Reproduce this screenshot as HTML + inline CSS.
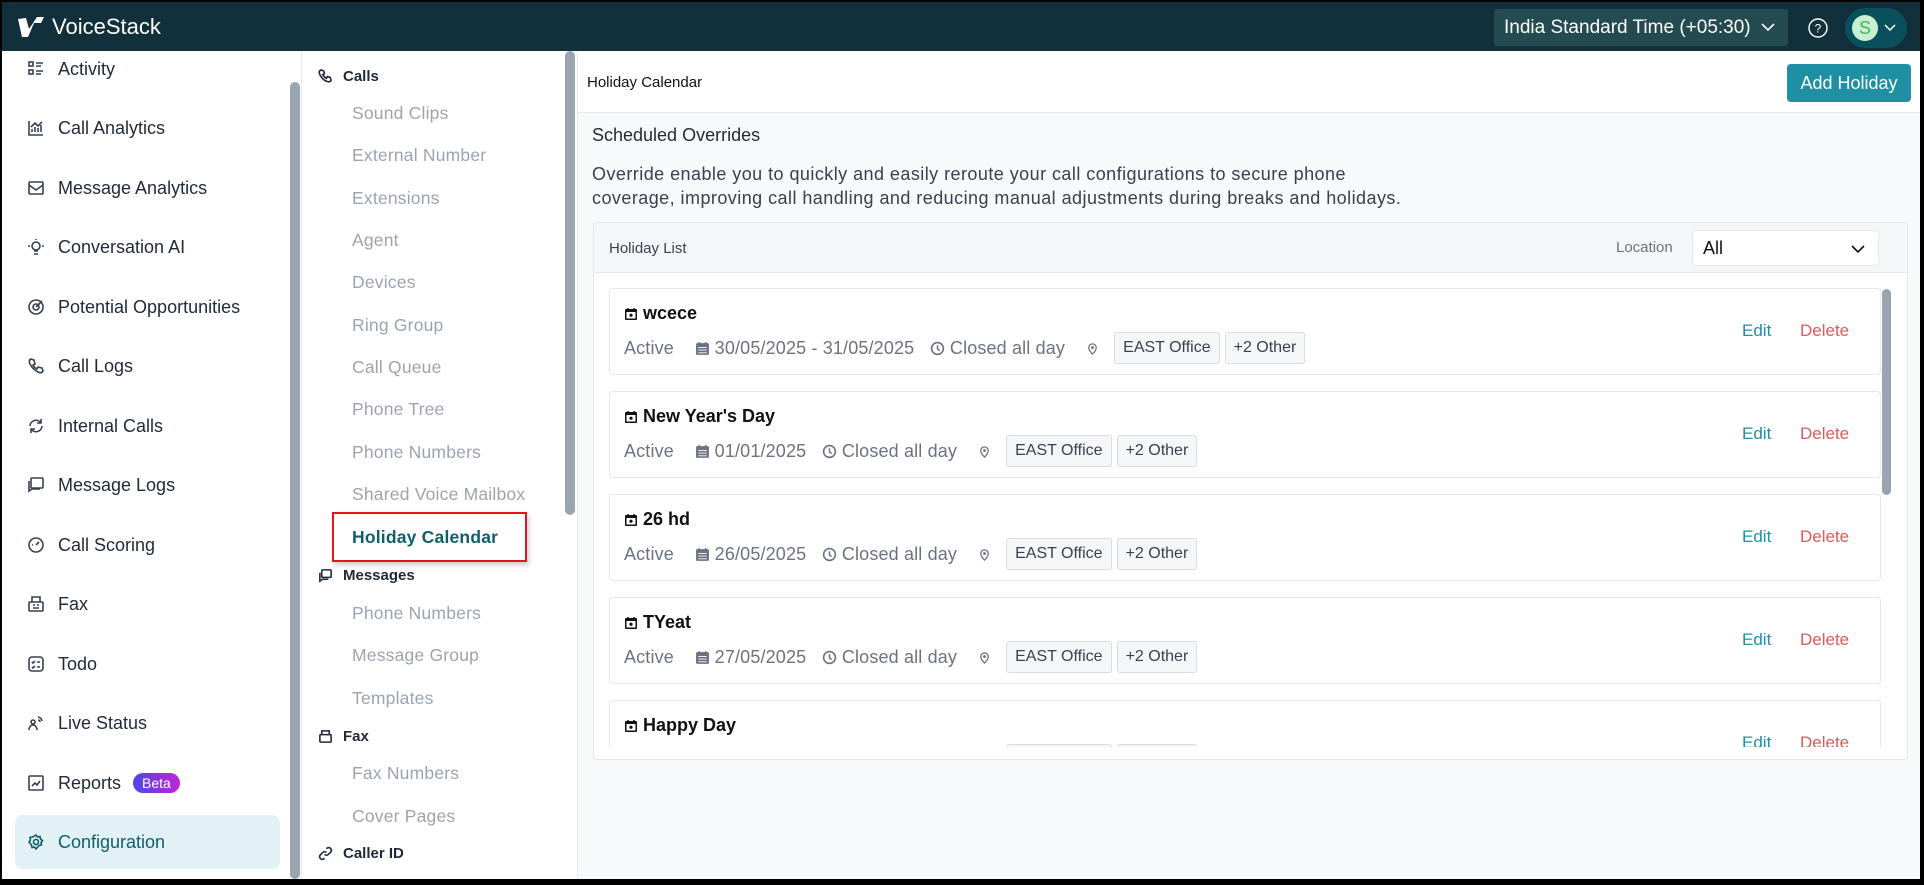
<!DOCTYPE html>
<html><head><meta charset="utf-8"><style>
*{box-sizing:border-box;margin:0;padding:0}
body{width:1924px;height:885px;overflow:hidden;background:#000;font-family:"Liberation Sans",sans-serif;position:relative}
.abs{position:absolute}
#app{position:absolute;left:2px;top:2px;width:1918px;height:877px;background:#fff;overflow:hidden}
#hdr{position:absolute;left:0;top:0;width:1918px;height:49px;background:#12303b}
.nav{position:absolute;left:25px;font-size:18px;color:#1f2937;display:flex;align-items:center;height:24px}
.nav svg{width:18px;height:18px;margin-right:13px;stroke:#374151;fill:none;stroke-width:1.6}
.sub{position:absolute;left:350px;font-size:17.5px;color:#9ca3af;height:24px;line-height:24px;letter-spacing:.2px}
.sec{position:absolute;left:316px;font-size:15px;font-weight:bold;color:#1f2937;display:flex;align-items:center;height:20px}
.sec svg{width:15px;height:15px;margin-right:10px;stroke:#1f2937;fill:none;stroke-width:1.7}
.card{position:absolute;left:607px;width:1272px;height:87px;background:#fff;border:1px solid #e5e7eb;border-radius:4px}
.card .t{position:absolute;left:14px;top:14px;font-size:18px;font-weight:bold;color:#111;display:flex;align-items:center}
.card .m{position:absolute;left:14px;top:43px;font-size:18px;color:#6b7280;display:flex;align-items:center;height:32px;white-space:nowrap;letter-spacing:.15px}
.tag{border:1px solid #d9dde3;background:#f5f6f8;border-radius:3px;font-size:16px;color:#374151;padding:0 8px;height:32px;line-height:30px;margin-right:5px;letter-spacing:0}
.card .e{position:absolute;left:1132px;top:32px;font-size:17px;color:#1f8fa3}
.card .d{position:absolute;left:1190px;top:32px;font-size:17px;color:#e05a5a}
</style></head><body>
<div id="app">
<div id="hdr">
 <svg class="abs" style="left:15px;top:13px" width="28" height="24" viewBox="0 0 28 24"><path d="M1 4 L9 3 L12 14 L20 2 L27 2 L24 8 L17 8 L11 22 L5 22 Z" fill="#fff"/></svg>
 <div class="abs" style="left:50px;top:12px;font-size:22px;color:#fff">VoiceStack</div>
 <div class="abs" style="left:1492px;top:7px;width:294px;height:37px;background:#244a52;border-radius:3px;color:#fff;font-size:19px;line-height:37px;padding-left:10px">India Standard Time (+05:30)<svg class="abs" style="right:12px;top:13px" width="16" height="10" viewBox="0 0 16 10"><path d="M2 2 L8 8 L14 2" stroke="#fff" stroke-width="1.6" fill="none"/></svg></div>
 <svg class="abs" style="left:1805px;top:15px" width="22" height="22" viewBox="0 0 22 22"><circle cx="11" cy="11" r="9" stroke="#fff" stroke-width="1.4" fill="none"/><text x="11" y="15.5" font-size="12" fill="#fff" text-anchor="middle" font-family="Liberation Sans">?</text></svg>
 <div class="abs" style="left:1843px;top:6px;width:62px;height:40px;background:#0a4f5c;border-radius:20px"></div>
 <div class="abs" style="left:1850px;top:13px;width:26px;height:26px;border-radius:13px;background:#c9efd3;color:#3dbb5a;font-size:18px;text-align:center;line-height:26px">S</div>
 <svg class="abs" style="left:1882px;top:22px" width="12" height="8" viewBox="0 0 12 8"><path d="M1 1 L6 6 L11 1" stroke="#fff" stroke-width="1.5" fill="none"/></svg>
</div>

<div class="abs" style="left:288px;top:80px;width:10px;height:797px;background:#9aa5b1;border-radius:5px"></div>
<div class="abs" style="left:299px;top:49px;width:1px;height:828px;background:#e5e7eb"></div>
<div class="abs" style="left:13px;top:813px;width:265px;height:54px;background:#e1f1f5;border-radius:8px"></div>
<div class="nav" style="top:55px"><svg viewBox="0 0 18 18"><rect x="2" y="2" width="4" height="4"/><rect x="2" y="10" width="4" height="4"/><path d="M9 3h7M9 6h5M9 11h7M9 14h5"/></svg>Activity</div>
<div class="nav" style="top:114px"><svg viewBox="0 0 18 18"><path d="M2 2v14h14M5 13v-3M8 13V8M11 13v-4M14 13V6M4 8l4-4 3 3 4-4"/></svg>Call Analytics</div>
<div class="nav" style="top:174px"><svg viewBox="0 0 18 18"><rect x="2" y="3" width="14" height="12" rx="1"/><path d="M2 6l7 5 7-5"/></svg>Message Analytics</div>
<div class="nav" style="top:233px"><svg viewBox="0 0 18 18"><circle cx="9" cy="8" r="4"/><path d="M7 13h4M7 16h4M1 8h2M15 8h2M9 1v1"/></svg>Conversation AI</div>
<div class="nav" style="top:293px"><svg viewBox="0 0 18 18"><circle cx="9" cy="9" r="7"/><circle cx="9" cy="9" r="3"/><path d="M9 9l6-6"/></svg>Potential Opportunities</div>
<div class="nav" style="top:352px"><svg viewBox="0 0 18 18"><path d="M4 2l3 1 1 4-2 1c1 2 2 3 4 4l1-2 4 1 1 3c-1 2-3 2-5 1C7 13 5 11 3 7 2 5 2 3 4 2z"/></svg>Call Logs</div>
<div class="nav" style="top:412px"><svg viewBox="0 0 18 18"><path d="M3 9a6 6 0 0 1 11-3M15 9a6 6 0 0 1-11 3M14 2v4h-4M4 16v-4h4"/></svg>Internal Calls</div>
<div class="nav" style="top:471px"><svg viewBox="0 0 18 18"><rect x="4" y="2" width="12" height="10" rx="1"/><path d="M2 5v10l3-2h8"/></svg>Message Logs</div>
<div class="nav" style="top:531px"><svg viewBox="0 0 18 18"><circle cx="9" cy="9" r="7"/><path d="M9 9l3-3M5 9h1"/></svg>Call Scoring</div>
<div class="nav" style="top:590px"><svg viewBox="0 0 18 18"><rect x="2" y="7" width="14" height="9" rx="1"/><path d="M5 7V2h8v5M6 10h2M10 10h2M6 13h6"/></svg>Fax</div>
<div class="nav" style="top:650px"><svg viewBox="0 0 18 18"><rect x="2" y="2" width="14" height="14" rx="3"/><path d="M5 7l1 1 2-2M10 7h3M5 12l1 1 2-2M10 12h3"/></svg>Todo</div>
<div class="nav" style="top:709px"><svg viewBox="0 0 18 18"><circle cx="6" cy="8" r="2"/><path d="M2 16c0-3 2-5 4-5s4 2 4 5M11 3a5 5 0 0 1 4 4M11 6a2 2 0 0 1 2 2"/></svg>Live Status</div>
<div class="nav" style="top:769px"><svg viewBox="0 0 18 18"><rect x="2" y="2" width="14" height="14" rx="1"/><path d="M5 12l3-3 2 2 3-4"/></svg>Reports<span style="margin-left:12px;background:linear-gradient(90deg,#4f46e5,#c026d3);color:#fff;font-size:14px;padding:2px 9px;border-radius:10px">Beta</span></div>
<div class="nav" style="top:828px;color:#0f5f6b"><svg viewBox="0 0 18 18" style="stroke:#0f5f6b"><circle cx="9" cy="9" r="2.5"/><path d="M9 2l1.5 2 2.5-.5.5 2.5 2 1.5-1.5 2 .5 2.5-2.5.5L9 16l-1.5-2-2.5.5-.5-2.5L2 9l1.5-2L3 4.5l2.5-.5z"/></svg>Configuration</div>

<div class="abs" style="left:563px;top:49px;width:10px;height:464px;background:#9aa5b1;border-radius:5px"></div>
<div class="abs" style="left:575px;top:49px;width:1px;height:828px;background:#e5e7eb"></div>
<div class="sec" style="top:64px"><svg viewBox="0 0 16 16"><path d="M3 1l3 1 1 3-2 1c1 2 2 3 4 4l1-2 3 1 1 3c-1 2-3 2-5 1C6 12 4 10 2 6 1 4 1 2 3 1z"/></svg>Calls</div>
<div class="sub" style="top:99px">Sound Clips</div>
<div class="sub" style="top:141px">External Number</div>
<div class="sub" style="top:184px">Extensions</div>
<div class="sub" style="top:226px">Agent</div>
<div class="sub" style="top:268px">Devices</div>
<div class="sub" style="top:311px">Ring Group</div>
<div class="sub" style="top:353px">Call Queue</div>
<div class="sub" style="top:395px">Phone Tree</div>
<div class="sub" style="top:438px">Phone Numbers</div>
<div class="sub" style="top:480px">Shared Voice Mailbox</div>
<div class="abs" style="left:330px;top:510px;width:195px;height:50px;border:2px solid #e3141b;box-shadow:2px 3px 5px rgba(0,0,0,.2)"></div>
<div class="sub" style="top:523px;color:#0f5f6b;font-weight:bold">Holiday Calendar</div>
<div class="sec" style="top:563px"><svg viewBox="0 0 16 16"><rect x="4" y="2" width="10" height="8" rx="1"/><path d="M2 5v9l3-2h6"/></svg>Messages</div>
<div class="sub" style="top:599px">Phone Numbers</div>
<div class="sub" style="top:641px">Message Group</div>
<div class="sub" style="top:684px">Templates</div>
<div class="sec" style="top:724px"><svg viewBox="0 0 16 16"><rect x="2" y="6" width="12" height="8" rx="1"/><path d="M4 6V2h8v4"/></svg>Fax</div>
<div class="sub" style="top:759px">Fax Numbers</div>
<div class="sub" style="top:802px">Cover Pages</div>
<div class="sec" style="top:841px"><svg viewBox="0 0 16 16"><path d="M7 9a3 3 0 0 0 4 0l3-3a3 3 0 0 0-4-4L9 3M9 7a3 3 0 0 0-4 0L2 10a3 3 0 0 0 4 4l1-1"/></svg>Caller ID</div>

<div class="abs" style="left:576px;top:49px;width:1342px;height:828px;background:#f8f9fb"></div>
<div class="abs" style="left:576px;top:49px;width:1342px;height:62px;background:#fff;border-bottom:1px solid #e5e7eb"></div>
<div class="abs" style="left:585px;top:72px;font-size:15px;color:#111">Holiday Calendar</div>
<div class="abs" style="left:1785px;top:62px;width:124px;height:38px;background:#1f8fa3;border-radius:4px;color:#fff;font-size:18px;text-align:center;line-height:38px">Add Holiday</div>
<div class="abs" style="left:590px;top:123px;font-size:18px;color:#1f2937">Scheduled Overrides</div>
<div class="abs" style="left:590px;top:160px;font-size:18px;color:#374151;line-height:24px;width:835px;letter-spacing:.45px">Override enable you to quickly and easily reroute your call configurations to secure phone coverage, improving call handling and reducing manual adjustments during breaks and holidays.</div>

<div class="abs" style="left:591px;top:220px;width:1315px;height:538px;background:#fff;border:1px solid #e5e7eb;border-radius:4px;overflow:hidden">
 <div class="abs" style="left:0;top:0;width:1315px;height:50px;background:#f5f6f8;border-bottom:1px solid #e5e7eb"></div>
 <div class="abs" style="left:15px;top:17px;font-size:15px;color:#374151">Holiday List</div>
 <div class="abs" style="left:1022px;top:16px;font-size:15px;color:#6b7280">Location</div>
 <div class="abs" style="left:1098px;top:7px;width:187px;height:36px;background:#fff;border:1px solid #e5e7eb;border-radius:4px;font-size:18px;color:#111;line-height:34px;padding-left:10px">All<svg class="abs" style="right:12px;top:13px" width="16" height="10" viewBox="0 0 16 10"><path d="M2 2 L8 8 L14 2" stroke="#111" stroke-width="1.6" fill="none"/></svg></div>
 <div class="abs" style="left:1288px;top:66px;width:9px;height:206px;background:#9aa5b1;border-radius:5px"></div>
</div>

<svg width="0" height="0" style="position:absolute"><defs><symbol id="cal" viewBox="0 0 14 14"><rect x="1" y="2" width="12" height="11" rx="1" fill="#111"/><rect x="2.5" y="5" width="9" height="6.5" fill="#fff"/><path d="M4 1v2M10 1v2" stroke="#111" stroke-width="1.5"/><circle cx="7" cy="8.2" r="1.6" fill="#111"/></symbol><symbol id="cal2" viewBox="0 0 14 14"><rect x="1" y="2" width="12" height="11" rx="1" fill="#6b7280"/><path d="M4 1v2M10 1v2" stroke="#6b7280" stroke-width="1.5"/><path d="M3 6h8M3 8.5h8M3 11h8" stroke="#fff" stroke-width=".8"/></symbol><symbol id="clk" viewBox="0 0 14 14"><circle cx="7" cy="7" r="5.5" stroke="#6b7280" stroke-width="1.5" fill="none"/><path d="M7 4v3.5l2 1.5" stroke="#6b7280" stroke-width="1.4" fill="none"/></symbol><symbol id="pin" viewBox="0 0 14 14"><path d="M7 13C4 10 3 8 3 6a4 4 0 0 1 8 0c0 2-1 4-4 7z" stroke="#6b7280" stroke-width="1.4" fill="none"/><circle cx="7" cy="6" r="1.5" fill="#6b7280"/></symbol></defs></svg>

<div class="abs" style="left:591px;top:272px;width:1290px;height:473px;overflow:hidden">
 <div class="card" style="left:16px;top:14px"><div class="t"><svg width="14" height="14"><use href="#cal"/></svg>&nbsp;wcece</div><div class="m">Active&nbsp;&nbsp;&nbsp;&nbsp;<svg width="15" height="15"><use href="#cal2"/></svg>&nbsp;30/05/2025 - 31/05/2025&nbsp;&nbsp;&nbsp;<svg width="15" height="15"><use href="#clk"/></svg>&nbsp;Closed all day&nbsp;&nbsp;&nbsp;&nbsp;<svg width="13" height="13"><use href="#pin"/></svg>&nbsp;&nbsp;&nbsp;<span class="tag">EAST Office</span><span class="tag">+2 Other</span></div><div class="e">Edit</div><div class="d">Delete</div></div>
 <div class="card" style="left:16px;top:117px"><div class="t"><svg width="14" height="14"><use href="#cal"/></svg>&nbsp;New Year's Day</div><div class="m">Active&nbsp;&nbsp;&nbsp;&nbsp;<svg width="15" height="15"><use href="#cal2"/></svg>&nbsp;01/01/2025&nbsp;&nbsp;&nbsp;<svg width="15" height="15"><use href="#clk"/></svg>&nbsp;Closed all day&nbsp;&nbsp;&nbsp;&nbsp;<svg width="13" height="13"><use href="#pin"/></svg>&nbsp;&nbsp;&nbsp;<span class="tag">EAST Office</span><span class="tag">+2 Other</span></div><div class="e">Edit</div><div class="d">Delete</div></div>
 <div class="card" style="left:16px;top:220px"><div class="t"><svg width="14" height="14"><use href="#cal"/></svg>&nbsp;26 hd</div><div class="m">Active&nbsp;&nbsp;&nbsp;&nbsp;<svg width="15" height="15"><use href="#cal2"/></svg>&nbsp;26/05/2025&nbsp;&nbsp;&nbsp;<svg width="15" height="15"><use href="#clk"/></svg>&nbsp;Closed all day&nbsp;&nbsp;&nbsp;&nbsp;<svg width="13" height="13"><use href="#pin"/></svg>&nbsp;&nbsp;&nbsp;<span class="tag">EAST Office</span><span class="tag">+2 Other</span></div><div class="e">Edit</div><div class="d">Delete</div></div>
 <div class="card" style="left:16px;top:323px"><div class="t"><svg width="14" height="14"><use href="#cal"/></svg>&nbsp;TYeat</div><div class="m">Active&nbsp;&nbsp;&nbsp;&nbsp;<svg width="15" height="15"><use href="#cal2"/></svg>&nbsp;27/05/2025&nbsp;&nbsp;&nbsp;<svg width="15" height="15"><use href="#clk"/></svg>&nbsp;Closed all day&nbsp;&nbsp;&nbsp;&nbsp;<svg width="13" height="13"><use href="#pin"/></svg>&nbsp;&nbsp;&nbsp;<span class="tag">EAST Office</span><span class="tag">+2 Other</span></div><div class="e">Edit</div><div class="d">Delete</div></div>
 <div class="card" style="left:16px;top:426px"><div class="t"><svg width="14" height="14"><use href="#cal"/></svg>&nbsp;Happy Day</div><div class="m">Active&nbsp;&nbsp;&nbsp;&nbsp;<svg width="15" height="15"><use href="#cal2"/></svg>&nbsp;27/05/2025&nbsp;&nbsp;&nbsp;<svg width="15" height="15"><use href="#clk"/></svg>&nbsp;Closed all day&nbsp;&nbsp;&nbsp;&nbsp;<svg width="13" height="13"><use href="#pin"/></svg>&nbsp;&nbsp;&nbsp;<span class="tag">EAST Office</span><span class="tag">+2 Other</span></div><div class="e">Edit</div><div class="d">Delete</div></div>
</div>
</div>
</body></html>
